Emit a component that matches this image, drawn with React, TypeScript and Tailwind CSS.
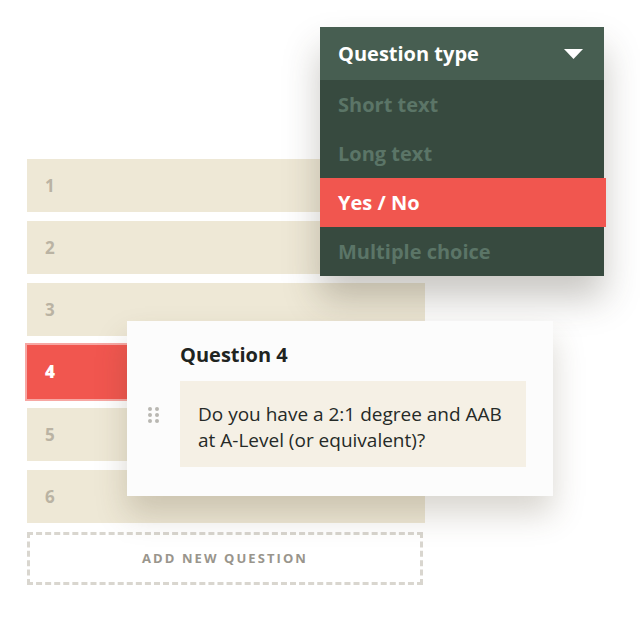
import React from 'react';

const font = { fontFamily: '"Open Sans", "Noto Sans", sans-serif' };

function Row({ n, active }: { n: number; active?: boolean }) {
  if (active) {
    return (
      <div className="h-[54px] w-[398px] bg-[#f1564f] outline-2 outline-[#f7a7a3] flex items-center pl-[18px]">
        <span className="text-[17px] font-extrabold text-white">{n}</span>
      </div>
    );
  }
  return (
    <div className="h-[53px] w-[398px] bg-[#eee8d6] flex items-center pl-[18px]">
      <span className="text-[17px] font-bold text-[#bab3a3]">{n}</span>
    </div>
  );
}

function Dropdown() {
  const items = ['Short text', 'Long text', 'Yes / No', 'Multiple choice'];
  return (
    <div className="absolute left-[320px] top-[27px] w-[284px] shadow-[0_22px_34px_rgba(60,55,40,0.28)]">
      <div className="h-[53px] bg-[#475e51] flex items-center justify-between pl-[18px] pr-[21px]">
        <span className="text-[20px] font-bold text-white">Question type</span>
        <svg width="19" height="10" viewBox="0 0 19 10">
          <path d="M0 0 H19 L9.5 10 Z" fill="#fff" />
        </svg>
      </div>
      {items.map((it) =>
        it === 'Yes / No' ? (
          <div key={it} className="h-[49px] w-[286px] bg-[#f1564f] flex items-center pl-[18px]">
            <span className="text-[20px] font-bold text-white">{it}</span>
          </div>
        ) : (
          <div key={it} className="h-[49px] bg-[#374a3f] flex items-center pl-[18px]">
            <span className="text-[20px] font-bold text-[#5b7567]">{it}</span>
          </div>
        )
      )}
    </div>
  );
}

function Card() {
  return (
    <div className="absolute left-[127px] top-[321px] w-[426px] h-[175px] bg-[#fcfcfc] shadow-[0_18px_30px_rgba(80,70,40,0.22)] flex">
      <div className="w-[53px] flex items-center justify-center pt-[13px]">
        <div className="grid grid-cols-2 gap-x-[3px] gap-y-[2px]">
          {[0, 1, 2, 3, 4, 5].map((i) => (
            <span key={i} className="w-[4px] h-[4px] rounded-full bg-[#b9b7b2]" />
          ))}
        </div>
      </div>
      <div className="flex flex-col pt-[21px]">
        <div className="text-[20px] font-bold text-[#1f2421] leading-[26px]">Question 4</div>
        <div className="mt-[13px] w-[346px] h-[86px] bg-[#f5f0e5] pl-[18px] pt-[20px] text-[19px] leading-[26px] text-[#252a27]">
          Do you have a 2:1 degree and AAB
          <br />
          at A-Level (or equivalent)?
        </div>
      </div>
    </div>
  );
}

export default function App() {
  return (
    <div className="relative w-[640px] h-[640px] bg-white overflow-hidden" style={font}>
      <div className="flex flex-col gap-[9px] pl-[27px] pt-[159px]">
        <Row n={1} />
        <Row n={2} />
        <Row n={3} />
        <Row n={4} active />
        <Row n={5} />
        <Row n={6} />
        <div className="h-[53px] w-[396px] border-[3px] border-dashed border-[#d9d6cf] flex items-center justify-center">
          <span className="text-[13px] font-bold tracking-[0.16em] text-[#99958c]">ADD NEW QUESTION</span>
        </div>
      </div>
      <Dropdown />
      <Card />
    </div>
  );
}
